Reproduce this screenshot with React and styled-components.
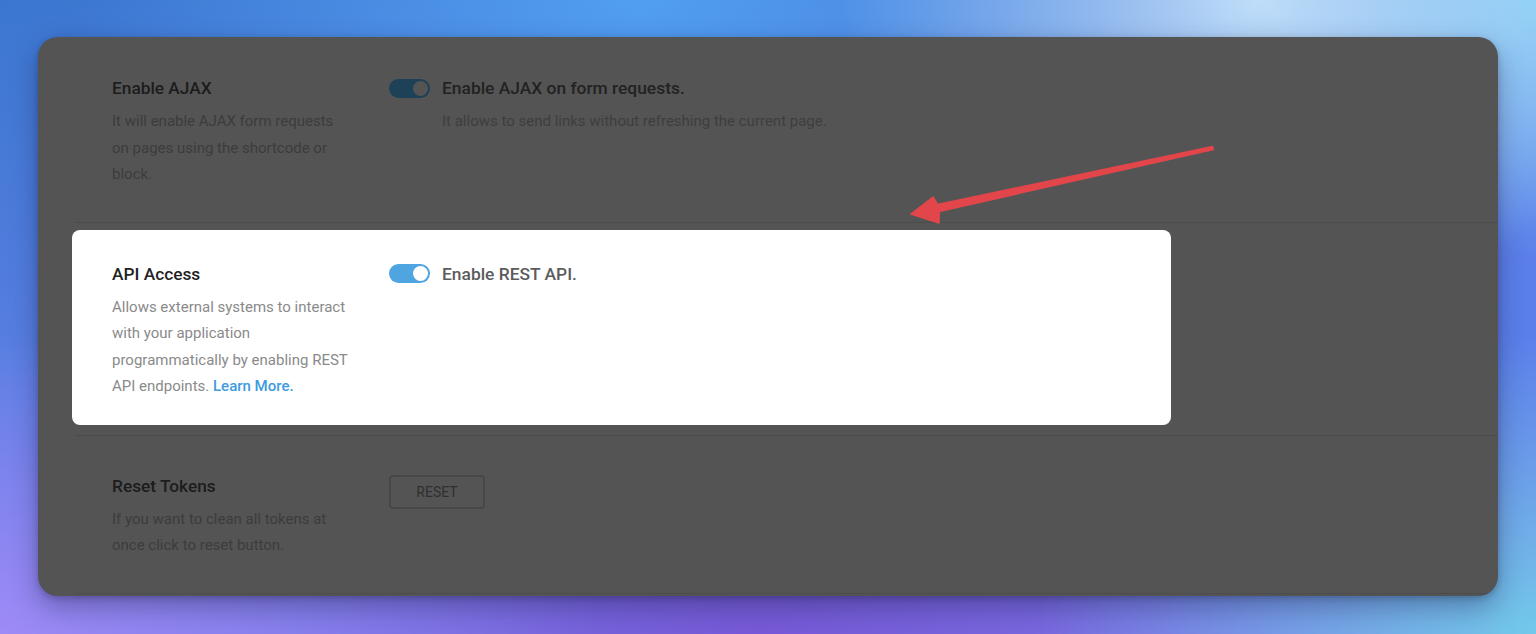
import React from 'react';
import styled, { createGlobalStyle } from 'styled-components';

const GlobalStyle = createGlobalStyle`
  html,
  body {
    margin: 0;
    padding: 0;
  }

  body {
    font-family: Roboto, 'Liberation Sans', sans-serif;
    -webkit-font-smoothing: antialiased;
  }
`;

const Page = styled.div`
  position: relative;
  box-sizing: border-box;
  width: 1536px;
  height: 634px;
  padding: 37px 38px 38px;
  overflow: hidden;
  background:
    radial-gradient(ellipse 420px 300px at 1260px 0px, rgba(196, 226, 250, 0.95), rgba(196, 226, 250, 0) 100%),
    radial-gradient(ellipse 360px 260px at 1536px 0px, rgba(128, 206, 246, 0.95), rgba(128, 206, 246, 0) 100%),
    radial-gradient(ellipse 500px 300px at 1536px 634px, rgba(112, 206, 234, 0.95), rgba(112, 206, 234, 0) 100%),
    radial-gradient(ellipse 420px 300px at 1536px 320px, rgba(88, 128, 236, 0.9), rgba(88, 128, 236, 0) 100%),
    radial-gradient(ellipse 600px 300px at 0px 634px, rgba(160, 140, 248, 0.95), rgba(160, 140, 248, 0) 100%),
    radial-gradient(ellipse 520px 240px at 760px 634px, rgba(120, 88, 216, 0.95), rgba(120, 88, 216, 0) 100%),
    radial-gradient(ellipse 560px 300px at 640px 0px, rgba(82, 160, 242, 0.95), rgba(82, 160, 242, 0) 100%),
    linear-gradient(170deg, #3b77d0 0%, #5b7fe4 45%, #8070e6 100%);
`;

const Card = styled.div`
  height: 100%;
  padding-left: 37px;
  border-radius: 20px;
  overflow: hidden;
  background: #545454;
  box-shadow: 0 12px 28px rgba(20, 20, 60, 0.35), 0 2px 6px rgba(0, 0, 0, 0.2);
`;

const Row = styled.div`
  display: grid;
  grid-template-columns: 277px 1fr;
  padding: ${props => props.padding || '40px 0 34px 37px'};
  border-bottom: 1px solid #4c4c4c;
`;

const SpotRow = styled.div`
  padding: 7px 0 10px;
  border-bottom: 1px solid #4c4c4c;
`;

const Spotlight = styled.div`
  display: grid;
  grid-template-columns: 277px 1fr;
  width: 1099px;
  margin-left: -3px;
  box-sizing: border-box;
  padding: 33px 0 25px 40px;
  border-radius: 8px;
  background: #ffffff;
`;

const Title = styled.div`
  font-size: 17.3px;
  line-height: 22px;
  font-weight: 500;
  color: ${props => (props.lit ? '#222222' : '#1c1c1c')};
`;

const Description = styled.div`
  width: 238px;
  margin-top: 9px;
  font-size: 15px;
  line-height: 26.5px;
  color: ${props => (props.lit ? '#8a8a8a' : '#3c3c3c')};

  a {
    color: #3d9be0;
    font-weight: 500;
    text-decoration: none;
  }
`;

const Control = styled.div`
  display: flex;
  align-items: center;
  gap: 12px;
  height: 22px;
`;

const Toggle = styled.span`
  position: relative;
  flex: none;
  width: 41px;
  height: 19px;
  border-radius: 10px;
  background: ${props => (props.lit ? '#4ea5e0' : '#1d4157')};

  &:after {
    position: absolute;
    content: '';
    top: 2px;
    right: 2px;
    width: 15px;
    height: 15px;
    border-radius: 50%;
    background: ${props => (props.lit ? '#ffffff' : '#545454')};
  }
`;

const Label = styled.span`
  font-size: 17.4px;
  font-weight: 500;
  color: ${props => (props.lit ? '#5c5c5c' : '#222222')};
`;

const Hint = styled.div`
  margin-top: 9px;
  padding-left: 53px;
  font-size: 15px;
  line-height: 26.5px;
  color: #3e3e3e;
`;

const ResetButton = styled.button`
  width: 96px;
  height: 34px;
  border: 2px solid #484848;
  border-radius: 4px;
  background: transparent;
  font-family: Roboto, 'Liberation Sans', sans-serif;
  font-size: 14px;
  color: #2f2f2f;
`;

const Arrow = styled.svg`
  position: absolute;
  top: 0;
  left: 0;
  width: 1536px;
  height: 634px;
  pointer-events: none;
`;

const App = () => (
  <Page>
    <GlobalStyle />
    <Card>
      <Row>
        <div>
          <Title>Enable AJAX</Title>
          <Description>
            It will enable AJAX form requests on pages using the shortcode or
            block.
          </Description>
        </div>
        <div>
          <Control>
            <Toggle />
            <Label>Enable AJAX on form requests.</Label>
          </Control>
          <Hint>It allows to send links without refreshing the current page.</Hint>
        </div>
      </Row>

      <SpotRow>
        <Spotlight>
          <div>
            <Title lit>API Access</Title>
            <Description lit>
              Allows external systems to interact with your application
              programmatically by enabling REST API endpoints.{' '}
              <a href="#learn-more">Learn More.</a>
            </Description>
          </div>
          <div>
            <Control>
              <Toggle lit />
              <Label lit>Enable REST API.</Label>
            </Control>
          </div>
        </Spotlight>
      </SpotRow>

      <Row padding="39px 0 34px 37px">
        <div>
          <Title>Reset Tokens</Title>
          <Description>
            If you want to clean all tokens at once click to reset button.
          </Description>
        </div>
        <div>
          <ResetButton>RESET</ResetButton>
        </div>
      </Row>
    </Card>

    <Arrow viewBox="0 0 1536 634">
      <polygon
        points="911,214 933,197 937.6,204.4 1212.6,146.6 1213.4,149.6 939.2,211.4 939,223"
        fill="#e2464b"
        stroke="#e2464b"
        strokeWidth="1.5"
        strokeLinejoin="round"
      />
    </Arrow>
  </Page>
);

export default App;
